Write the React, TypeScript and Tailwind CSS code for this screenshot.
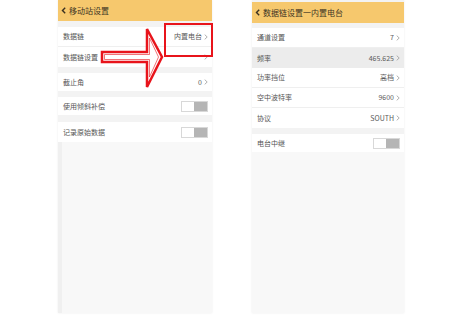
import React from "react";

const font = { fontFamily: '"Noto Sans CJK SC", "Noto Sans", sans-serif' };

function Chevron() {
  return (
    <svg width="4" height="6" viewBox="0 0 4 6" className="ml-[2px]">
      <path d="M0.7 0.6 L3.2 3 L0.7 5.4" fill="none" stroke="#9a9a9a" strokeWidth="0.8" />
    </svg>
  );
}

function Toggle() {
  return (
    <div className="flex h-[11px] w-[27px] border border-[#d8d8d8] bg-white">
      <div className="flex-1 bg-white" />
      <div className="w-[13px] bg-[#b5b5b5]" />
    </div>
  );
}

function Row({ label, value, toggle, h = 20, bg = "bg-white", line = false }: { label: string; value?: string; toggle?: boolean; h?: number; bg?: string; line?: boolean }) {
  return (
    <div className={`flex items-center justify-between pl-[5px] pr-[4px] ${bg} ${line ? "border-b border-[#efefef]" : ""}`} style={{ height: h }}>
      <span className="text-[7px] leading-none text-[#555]">{label}</span>
      {toggle ? (
        <Toggle />
      ) : value !== undefined ? (
        <span className="flex items-center text-[7px] leading-none text-[#5a5a5a]">
          {value}
          <Chevron />
        </span>
      ) : null}
    </div>
  );
}

function Header({ title }: { title: string }) {
  return (
    <div className="flex h-[21px] items-center bg-[#f6c86d] pl-[3px]">
      <svg width="6" height="7" viewBox="0 0 6 7" className="mr-[2px]">
        <path d="M4.2 0.8 L1.5 3.5 L4.2 6.2" fill="none" stroke="#3a3020" strokeWidth="1.4" />
      </svg>
      <span className="text-[8px] leading-none text-[#3d3424]">{title}</span>
    </div>
  );
}

export default function App() {
  return (
    <div className="relative h-[316px] w-[474px] overflow-hidden bg-white" style={font}>
      <div className="flex pl-[58px]">
        {/* Left phone */}
        <div className="flex h-[313px] w-[154px] flex-col bg-[#f3f3f3] shadow-[0_0_2px_rgba(0,0,0,0.08)]">
          <Header title="移动站设置" />
          <div className="h-[6px]" />
          <Row label="数据链" value="内置电台" line />
          <Row label="数据链设置" value="" />
          <div className="h-[6px]" />
          <Row label="截止角" value="0" h={18} />
          <div className="h-[6px]" />
          <Row label="使用倾斜补偿" toggle h={18} />
          <div className="h-[7px]" />
          <Row label="记录原始数据" toggle h={20} />
          <div className="flex-1 border-l-[4px] border-[#f0f0f0] bg-[#f8f8f8]" />
        </div>

        {/* Right phone */}
        <div className="ml-[40px] flex h-[313px] w-[152px] flex-col bg-[#f3f3f3] pt-[2px] shadow-[0_0_2px_rgba(0,0,0,0.08)]">
          <Header title="数据链设置一内置电台" />
          <div className="h-[5px]" />
          <Row label="通道设置" value="7" line />
          <Row label="频率" value="465.625" bg="bg-[#ececec]" />
          <Row label="功率挡位" value="高档" line />
          <Row label="空中波特率" value="9600" line />
          <Row label="协议" value="SOUTH" />
          <div className="h-[6px]" />
          <Row label="电台中继" toggle h={18} />
          <div className="flex-1 bg-[#f8f8f8]" />
        </div>
      </div>

      {/* Red annotation box */}
      <div className="absolute left-[164px] top-[23px] h-[34px] w-[49px] border-2 border-[#e8141b]" />

      {/* Red arrow */}
      <svg className="absolute left-0 top-0" width="474" height="316" viewBox="0 0 474 316">
        <polygon
          points="102,52 147,52 147,29 162,57 147,87 147,62 102,62"
          fill="white"
          stroke="#e8141b"
          strokeWidth="2.5"
          strokeLinejoin="miter"
        />
        <polygon
          points="104.5,54.5 149.5,54.5 149.5,38 158.5,57 149.5,77 149.5,59.5 104.5,59.5"
          fill="none"
          stroke="#e8141b"
          strokeWidth="0.6"
        />
      </svg>
    </div>
  );
}
